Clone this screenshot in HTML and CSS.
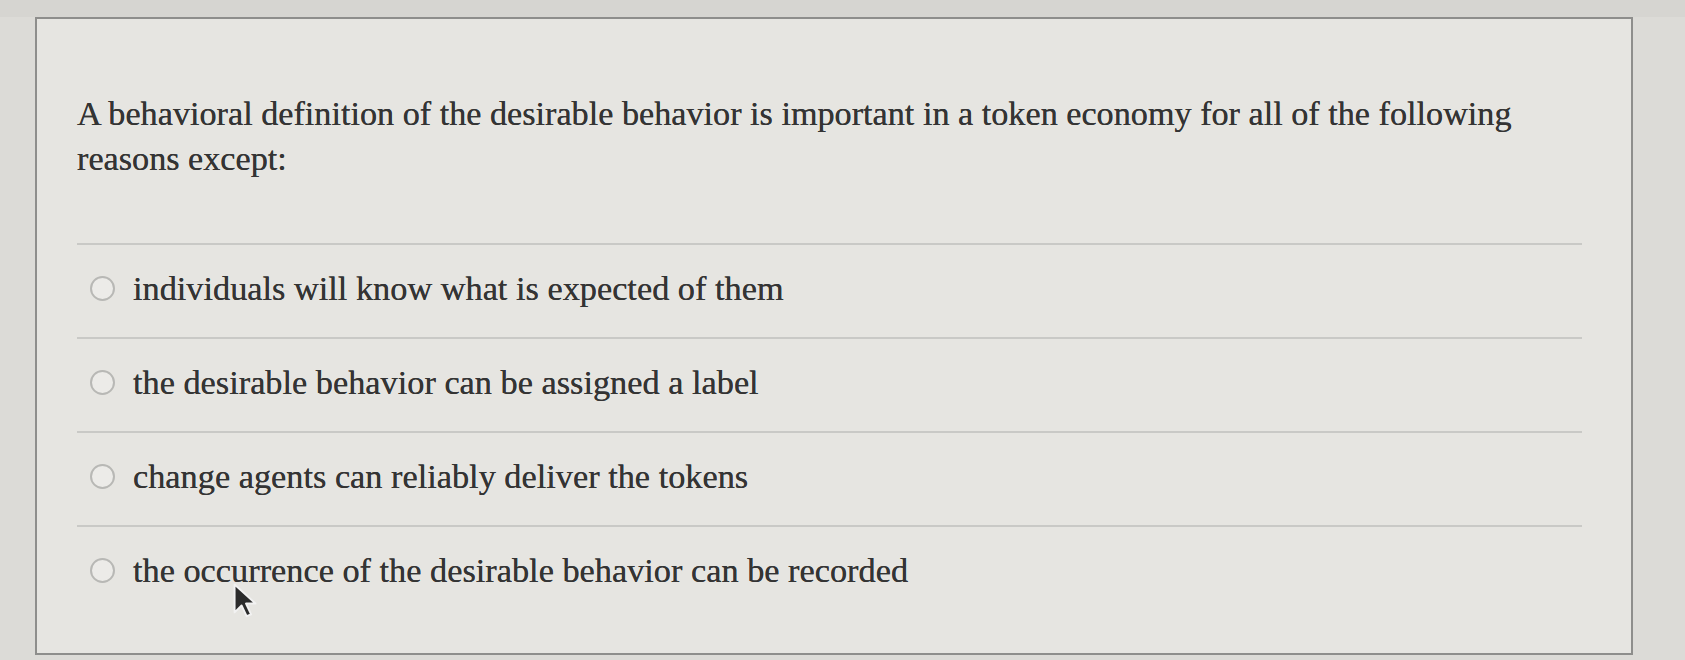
FILE: index.html
```html
<!DOCTYPE html>
<html>
<head>
<meta charset="utf-8">
<link rel="stylesheet" href="styles.css">
</head>
<body>
<div class="topbar"></div>
<div class="panel">
  <p class="question">A behavioral definition of the desirable behavior is important in a token economy for all of the following reasons except:</p>
  <ul class="options">
    <li class="option"><span class="radio"></span><span class="label">individuals will know what is expected of them</span></li>
    <li class="option"><span class="radio"></span><span class="label">the desirable behavior can be assigned a label</span></li>
    <li class="option"><span class="radio"></span><span class="label">change agents can reliably deliver the tokens</span></li>
    <li class="option"><span class="radio"></span><span class="label">the occurrence of the desirable behavior can be recorded</span></li>
  </ul>
  <svg class="cursor" width="28" height="38" viewBox="0 0 22 30"><path d="M2 2 L2 24 L7.5 18.5 L11.5 27 L15 25.5 L11 17 L18.5 17 Z" fill="#2b2b2b" stroke="#f2f2f2" stroke-width="1.5" stroke-linejoin="round"/></svg>
</div>
</body>
</html>
```
FILE: styles.css
```css
html, body {
  margin: 0;
  padding: 0;
}
body {
  width: 1685px;
  height: 660px;
  overflow: hidden;
  background: #dcdbd7;
  font-family: "Liberation Serif", "Times New Roman", serif;
  color: #343434;
}
.topbar {
  height: 17px;
  background: #d6d5d1;
}
.panel {
  position: relative;
  margin-left: 35px;
  width: 1598px;
  height: 638px;
  background: #e6e5e1;
  border: 2px solid #8e8e8c;
  box-sizing: border-box;
  padding: 72px 0 0 40px;
}
.question {
  margin: 0;
  width: 1490px;
  font-size: 34.2px;
  line-height: 45px;
  text-shadow: 0 0 0.6px #343434;
}
.options {
  list-style: none;
  margin: 62px 0 0 0;
  padding: 0;
  width: 1505px;
}
.option {
  display: flex;
  align-items: center;
  gap: 18px;
  height: 94px;
  border-top: 2px solid #c9c9c6;
  padding: 0 0 6px 13px;
  box-sizing: border-box;
  font-size: 34.3px;
  text-shadow: 0 0 0.6px #343434;
}
.radio {
  width: 25px;
  height: 25px;
  border-radius: 50%;
  border: 2px solid #b8b8b5;
  background: #ecebe8;
  flex: none;
  box-sizing: border-box;
}
.cursor {
  position: absolute;
  left: 195px;
  top: 563px;
}
```
